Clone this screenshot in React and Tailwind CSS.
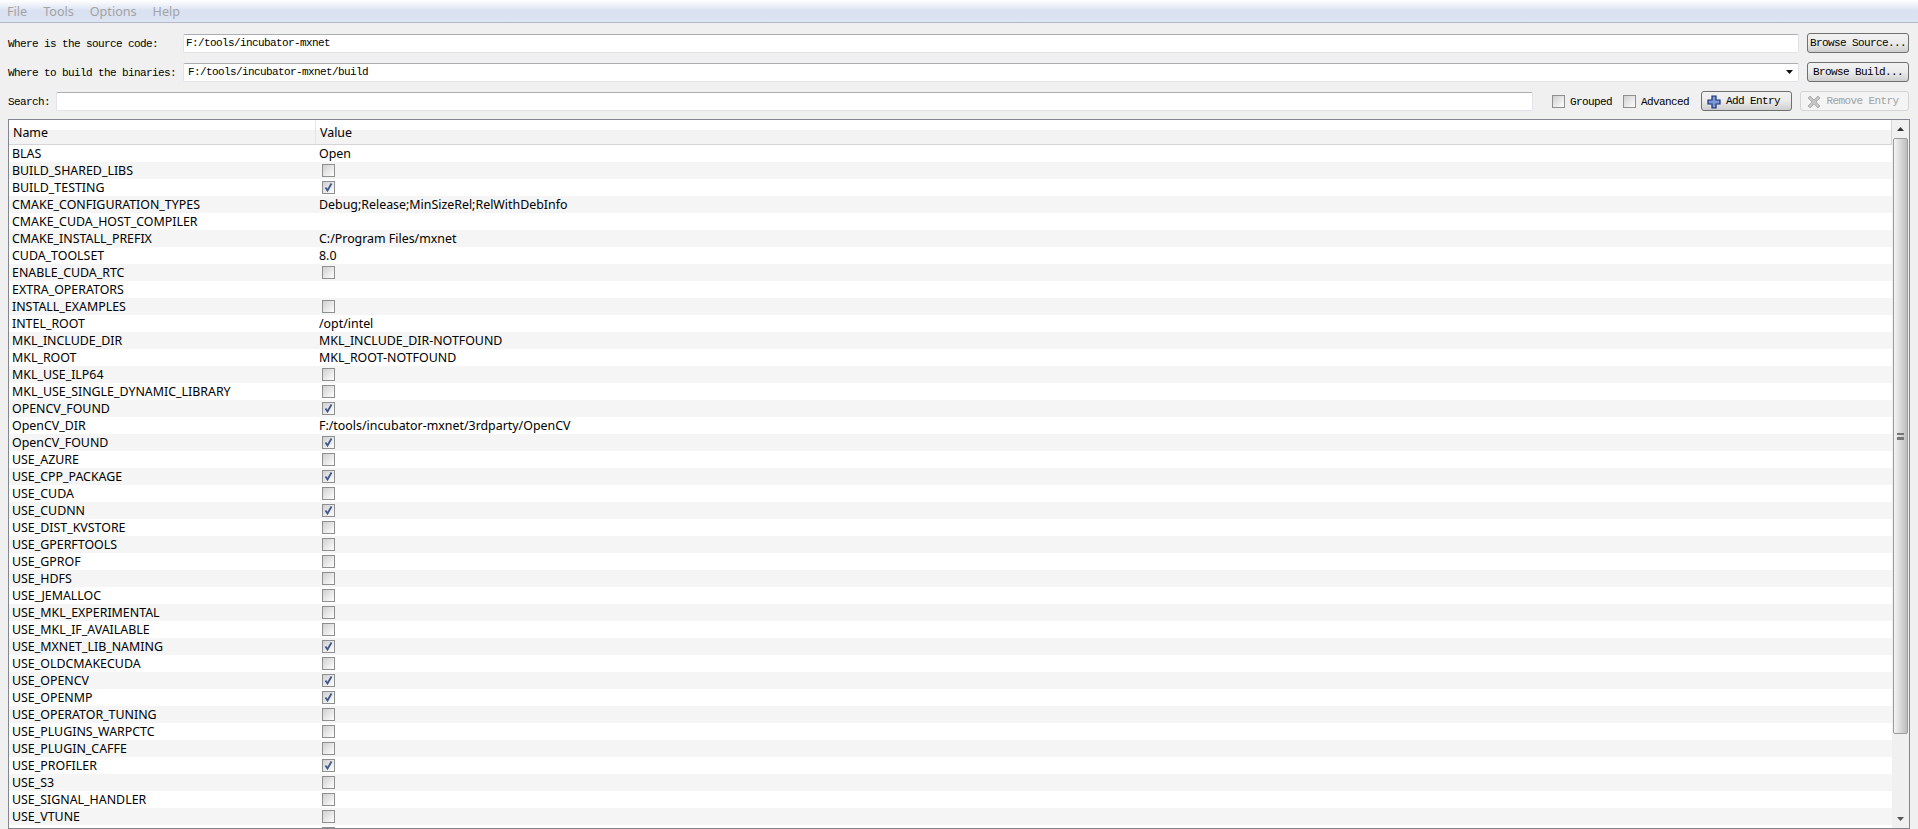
import React from 'react';

const rows = [
  ['BLAS', 'Open'],
  ['BUILD_SHARED_LIBS', false],
  ['BUILD_TESTING', true],
  ['CMAKE_CONFIGURATION_TYPES', 'Debug;Release;MinSizeRel;RelWithDebInfo'],
  ['CMAKE_CUDA_HOST_COMPILER', ''],
  ['CMAKE_INSTALL_PREFIX', 'C:/Program Files/mxnet'],
  ['CUDA_TOOLSET', '8.0'],
  ['ENABLE_CUDA_RTC', false],
  ['EXTRA_OPERATORS', ''],
  ['INSTALL_EXAMPLES', false],
  ['INTEL_ROOT', '/opt/intel'],
  ['MKL_INCLUDE_DIR', 'MKL_INCLUDE_DIR-NOTFOUND'],
  ['MKL_ROOT', 'MKL_ROOT-NOTFOUND'],
  ['MKL_USE_ILP64', false],
  ['MKL_USE_SINGLE_DYNAMIC_LIBRARY', false],
  ['OPENCV_FOUND', true],
  ['OpenCV_DIR', 'F:/tools/incubator-mxnet/3rdparty/OpenCV'],
  ['OpenCV_FOUND', true],
  ['USE_AZURE', false],
  ['USE_CPP_PACKAGE', true],
  ['USE_CUDA', false],
  ['USE_CUDNN', true],
  ['USE_DIST_KVSTORE', false],
  ['USE_GPERFTOOLS', false],
  ['USE_GPROF', false],
  ['USE_HDFS', false],
  ['USE_JEMALLOC', false],
  ['USE_MKL_EXPERIMENTAL', false],
  ['USE_MKL_IF_AVAILABLE', false],
  ['USE_MXNET_LIB_NAMING', true],
  ['USE_OLDCMAKECUDA', false],
  ['USE_OPENCV', true],
  ['USE_OPENMP', true],
  ['USE_OPERATOR_TUNING', false],
  ['USE_PLUGINS_WARPCTC', false],
  ['USE_PLUGIN_CAFFE', false],
  ['USE_PROFILER', true],
  ['USE_S3', false],
  ['USE_SIGNAL_HANDLER', false],
  ['USE_VTUNE', false],
  ['', false],
];

const mono = "font-['Liberation_Mono',monospace] text-[11px] tracking-[-0.6px] text-black";

function Check({ checked }) {
  return (
    <div className="w-[13px] h-[13px] shrink-0 border border-[#8e8f8f] bg-gradient-to-br from-[#cfcfcf] to-white flex items-center justify-center">
      {checked && (
        <svg viewBox="0 0 11 11" className="w-[11px] h-[11px]">
          <path d="M2.5 5.5 L4.5 8.5 L8.5 1.5" fill="none" stroke="#40578f" strokeWidth="1.8" />
        </svg>
      )}
    </div>
  );
}

function TextBox({ className, children }) {
  return (
    <div className={`h-[19px] shrink-0 bg-white border border-[#e2e3ea] border-t-[#abadb3] rounded-[2px] flex items-center ${mono} ${className}`}>
      {children}
    </div>
  );
}

function Button({ className, disabled, children }) {
  return (
    <div
      className={`h-[20px] shrink-0 rounded-[3px] border flex items-center justify-center whitespace-nowrap pt-px ${mono}
        ${disabled
          ? 'border-[#d5d5d5] bg-[#f4f4f4] !text-[#a0a0a0]'
          : 'border-[#707070] bg-gradient-to-b from-[#f2f2f2] via-[#ebebeb] to-[#cfcfcf]'
        } ${className}`}
    >
      {children}
    </div>
  );
}

export default function App() {
  return (
    <div className="w-[1918px] h-[829px] overflow-hidden bg-[#f0f0f0] flex flex-col">
      {/* Menu bar */}
      <div className="h-[23px] shrink-0 bg-gradient-to-b from-white via-[#d9e1f2] to-[#dde4f2] border-b border-[#b4b9c8] flex items-end font-['Noto_Sans',sans-serif] text-[12.6px] text-[#a3a3a3]">
        <span className="ml-[7px]">File</span>
        <span className="ml-[16px]">Tools</span>
        <span className="ml-[16px]">Options</span>
        <span className="ml-[16px]">Help</span>
      </div>

      {/* Source and build paths */}
      <div className="flex items-center h-[20px] mt-[10px] pl-[8px] pr-[9px]">
        <span className={`${mono} w-[175px] shrink-0 pt-[2px]`}>Where is the source code:</span>
        <TextBox className="w-[1616px] pl-[2px]">F:/tools/incubator-mxnet</TextBox>
        <Button className="w-[102px] ml-[8px]">Browse Source...</Button>
      </div>
      <div className="flex items-center h-[20px] mt-[9px] pl-[8px] pr-[9px]">
        <span className={`${mono} w-[175px] shrink-0 pt-[2px]`}>Where to build the binaries:</span>
        <TextBox className="w-[1616px] pl-[4px] justify-between">
          <span>F:/tools/incubator-mxnet/build</span>
          <svg viewBox="0 0 7 4" className="w-[7px] h-[4px] mr-[5px]"><path d="M0 0H7L3.5 4Z" fill="#111" /></svg>
        </TextBox>
        <Button className="w-[102px] ml-[8px]">Browse Build...</Button>
      </div>

      {/* Search and actions */}
      <div className="flex items-center h-[20px] mt-[9px] pl-[8px] pr-[9px]">
        <span className={`${mono} w-[48px] shrink-0 pt-[2px]`}>Search:</span>
        <TextBox className="w-[1477px]" />
        <div className="ml-[19px]"><Check /></div>
        <span className={`${mono} ml-[5px] w-[53px] shrink-0 pt-[2px]`}>Grouped</span>
        <Check />
        <span className={`${mono} ml-[5px] w-[60px] shrink-0 pt-[2px]`}>Advanced</span>
        <Button className="w-[91px] gap-[5px] pr-[6px]">
          <svg viewBox="0 0 14 14" className="w-[14px] h-[14px]">
            <path d="M5 1H9V5H13V9H9V13H5V9H1V5H5Z" fill="#7d9ad6" stroke="#1c2f78" strokeWidth="1.2" />
          </svg>
          Add Entry
        </Button>
        <Button disabled className="w-[109px] ml-[8px] gap-[5px] pr-[3px]">
          <svg viewBox="0 0 14 14" className="w-[14px] h-[14px]">
            <path d="M3 1L7 5L11 1L13 3L9 7L13 11L11 13L7 9L3 13L1 11L5 7L1 3Z" fill="#c4c4c4" stroke="#b0b0b0" strokeWidth="1" />
          </svg>
          Remove Entry
        </Button>
      </div>

      {/* Cache table */}
      <div className="mt-[8px] ml-[8px] w-[1902px] h-[710px] border border-[#82878f] bg-white flex overflow-hidden">
        <div className="flex-1 min-w-0 flex flex-col font-['Noto_Sans',sans-serif] text-[12.4px] text-black">
          <div className="h-[25px] shrink-0 flex border-b border-r border-[#d5d5d5] bg-gradient-to-b from-white from-40% to-[#f3f3f3] to-40% leading-[25px]">
            <div className="w-[307px] pl-[4px] border-r border-[#e5e5e5]">Name</div>
            <div className="pl-[4px]">Value</div>
          </div>
          {rows.map(([name, value], i) => (
            <div key={i} className={`h-[17px] shrink-0 flex items-center pl-[3px] leading-[17px] ${i % 2 ? 'bg-[#f5f5f5]' : 'bg-white'}`}>
              <div className="w-[305px] whitespace-nowrap">{name}</div>
              {typeof value === 'string'
                ? <div className="pl-[2px] whitespace-nowrap">{value}</div>
                : <div className="pl-[5px]"><Check checked={value} /></div>}
            </div>
          ))}
        </div>

        {/* Scrollbar */}
        <div className="w-[17px] shrink-0 bg-[#f0f0f0] flex flex-col items-center">
          <div className="h-[18px] w-full shrink-0 flex items-center justify-center">
            <svg viewBox="0 0 7 4" className="w-[7px] h-[4px]"><path d="M3.5 0L7 4H0Z" fill="#333" /></svg>
          </div>
          <div className="h-[596px] w-[15px] shrink-0 rounded-[2px] border border-[#9c9c9c] bg-gradient-to-r from-[#f4f4f4] via-[#d8d8d8] to-[#bdbdbd] flex items-center justify-center">
            <div className="w-[7px] h-[7px] border-y-2 border-[#777]">
              <div className="h-px mt-[2px] bg-[#777]" />
            </div>
          </div>
          <div className="flex-1" />
          <div className="h-[18px] w-full shrink-0 flex items-center justify-center">
            <svg viewBox="0 0 7 4" className="w-[7px] h-[4px]"><path d="M0 0H7L3.5 4Z" fill="#555" /></svg>
          </div>
        </div>
      </div>
    </div>
  );
}
